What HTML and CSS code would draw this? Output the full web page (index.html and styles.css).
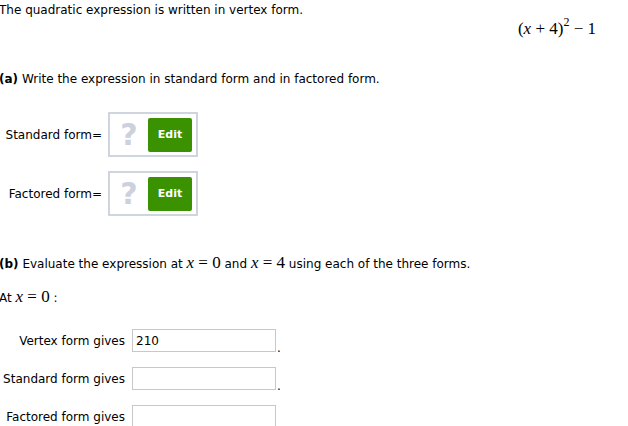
FILE: index.html
```html
<!DOCTYPE html>
<html>
<head>
<meta charset="utf-8">
<link rel="stylesheet" href="styles.css">
</head>
<body>
<div class="page">
  <p class="intro">The quadratic expression is written in vertex form.</p>
  <div class="display"><span class="m">(<i>x</i> + 4)<sup>2</sup> − 1</span></div>
  <p class="part-a"><b>(a)</b> Write the expression in standard form and in factored form.</p>
  <div class="forms">
    <div class="form-row">
      <span class="flabel">Standard form=</span>
      <div class="answer-box"><span class="qmark">?</span><span class="edit">Edit</span></div>
    </div>
    <div class="form-row">
      <span class="flabel">Factored form=</span>
      <div class="answer-box"><span class="qmark">?</span><span class="edit">Edit</span></div>
    </div>
  </div>
  <p class="part-b"><b>(b)</b> Evaluate the expression at <span class="m"><i>x</i> = 0</span> and <span class="m"><i>x</i> = 4</span> using each of the three forms.</p>
  <p class="at">At <span class="m"><i>x</i> = 0</span> :</p>
  <div class="gives">
    <div class="give-row"><span class="glabel">Vertex form gives</span><span class="field">210</span><span class="dot">.</span></div>
    <div class="give-row"><span class="glabel">Standard form gives</span><span class="field"></span><span class="dot">.</span></div>
    <div class="give-row"><span class="glabel">Factored form gives</span><span class="field"></span><span class="dot">.</span></div>
  </div>
</div>
</body>
</html>
```
FILE: styles.css
```css
html, body { margin: 0; padding: 0; background: #fff; }
body {
  font-family: "DejaVu Sans", Verdana, sans-serif;
  font-size: 12px;
  color: #000;
}
.page { margin-left: -1px; }
p { margin: 0; white-space: nowrap; }
.intro { padding-top: 2px; line-height: 16px; }
.display { text-align: right; padding-right: 32px; height: 40px; line-height: 22px; }
.m { font-family: "Liberation Serif", "Times New Roman", serif; font-size: 17px; }
.m i { font-style: italic; }
.display .m sup { font-size: 12px; vertical-align: 8px; line-height: 0; }
.part-a { margin-top: 13px; line-height: 16px; }
.forms { margin-top: 25px; display: flex; flex-direction: column; gap: 14px; }
.form-row { display: flex; align-items: center; }
.flabel { width: 103px; text-align: right; padding-right: 6px; white-space: nowrap; }
.answer-box {
  height: 41px;
  border: 2px solid #cfd5df;
  display: flex; align-items: center;
  padding: 0 4px 0 0;
  width: 82px;
}
.qmark { width: 38px; text-align: center; font-size: 30px; font-weight: bold; color: #ccd1dd; line-height: 1; }
.edit {
  background: #3a9200; color: #fff; font-weight: bold; font-size: 11px;
  width: 44px; height: 34px; border-radius: 2px;
  display: flex; align-items: center; justify-content: center;
}
.part-b { margin-top: 38px; line-height: 18px; }
.at { margin-top: 15px; line-height: 18px; }
.gives { margin-top: 22px; display: flex; flex-direction: column; gap: 15px; }
.give-row { display: flex; align-items: center; }
.glabel { width: 133px; text-align: right; padding-right: 7px; box-sizing: border-box; white-space: nowrap; }
.field {
  width: 139px; height: 21px; border: 1px solid #c8c8c8;
  padding-left: 3px; line-height: 22px;
}
.dot { align-self: flex-end; margin-bottom: -3px; margin-left: 1px; }
```
